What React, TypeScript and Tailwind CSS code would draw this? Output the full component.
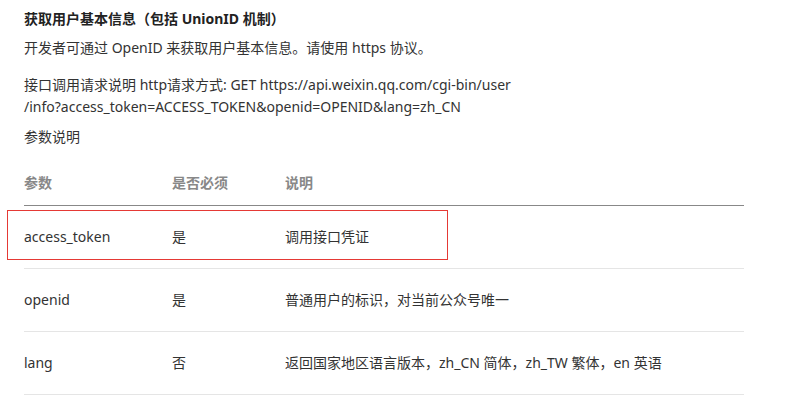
export default function App() {
  const rows = [
    { name: 'access_token', required: '是', desc: '调用接口凭证' },
    { name: 'openid', required: '是', desc: '普通用户的标识，对当前公众号唯一' },
    { name: 'lang', required: '否', desc: '返回国家地区语言版本，zh_CN 简体，zh_TW 繁体，en 英语' },
  ];

  return (
    <div
      className="relative w-[803px] h-[417px] overflow-hidden bg-white pl-6 pt-2 text-[14px] leading-[22px] text-[#333]"
      style={{ fontFamily: '"Noto Sans", "Noto Sans CJK SC", sans-serif' }}
    >
      <h3 className="font-bold text-[#222]">获取用户基本信息（包括 UnionID 机制）</h3>
      <p className="mt-[7px]">开发者可通过 OpenID 来获取用户基本信息。请使用 https 协议。</p>
      <p className="mt-[15px]">
        接口调用请求说明 http请求方式: GET https://api.weixin.qq.com/cgi-bin/user
        <br />
        /info?access_token=ACCESS_TOKEN&amp;openid=OPENID&amp;lang=zh_CN
      </p>
      <p className="mt-[8px]">参数说明</p>

      <div className="mt-[13px] w-[720px]">
        <div className="flex border-b border-[#888] py-[11px] font-bold text-[#888]">
          <div className="w-[148px]">参数</div>
          <div className="w-[113px]">是否必须</div>
          <div className="flex-1">说明</div>
        </div>
        {rows.map((r) => (
          <div key={r.name} className="flex h-[63px] items-center border-b border-[#e5e5e5]">
            <div className="w-[148px]">{r.name}</div>
            <div className="w-[113px]">{r.required}</div>
            <div className="flex-1">{r.desc}</div>
          </div>
        ))}
      </div>

      {/* highlight annotation */}
      <div className="absolute left-[7px] top-[210px] h-[50px] w-[441px] border border-[#e53935]" />
    </div>
  );
}
